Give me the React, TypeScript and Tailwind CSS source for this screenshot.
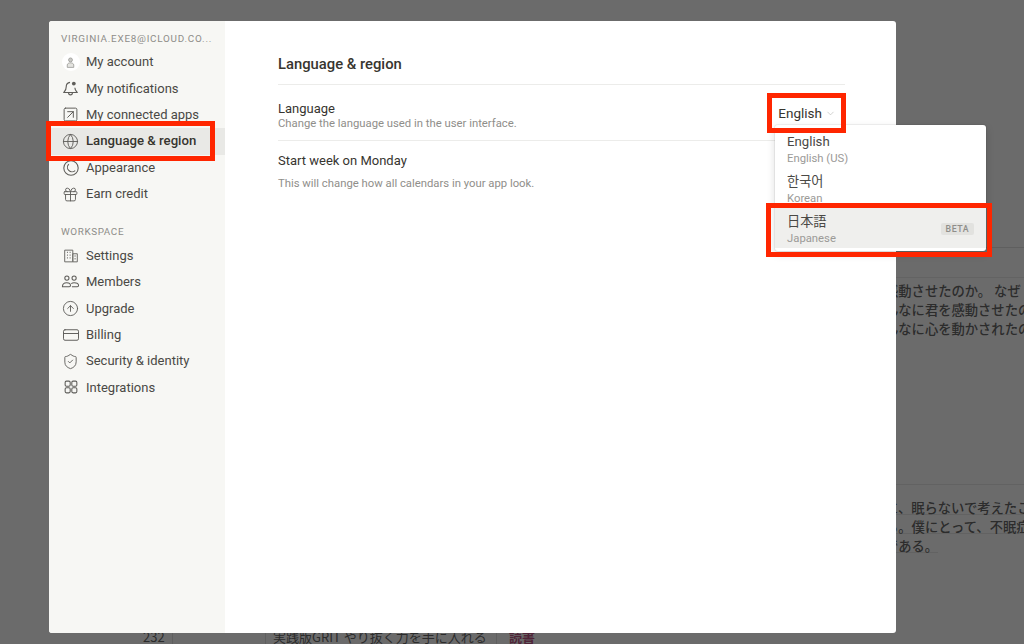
import { CreditCard, Gift, Globe, ShieldCheck, ChevronDown, CircleArrowUp, SquareArrowUpRight } from "lucide-react";
import type { ReactNode } from "react";

const iconClass = "w-[17px] h-[17px] text-[#5f5e5a]";

const AvatarIcon = () => (
  <div className="w-[18px] h-[18px] rounded-full bg-white flex items-center justify-center">
    <svg viewBox="0 0 16 16" className="w-[13px] h-[13px]" fill="none" stroke="#9a9a96" strokeWidth="1">
      <circle cx="8" cy="4.8" r="2.4" fill="#c9c9c5" />
      <path d="M4 14v-3c0-1.5 1.8-2.6 4-2.6s4 1.1 4 2.6v3z" fill="#e4e4e0" />
    </svg>
  </div>
);

const BellIcon = () => (
  <svg viewBox="0 0 20 20" className="w-[19px] h-[19px] text-[#5f5e5a]" fill="none" stroke="currentColor" strokeWidth="1.2">
    <path d="M9.5 3.5C7 3.8 5.5 5.8 5.5 8.2c0 3.8-2 5-2.5 6h14c-.5-1-2.2-2-2.4-5" />
    <path d="M8 14.5c0 3 4 3 4 0" />
    <circle cx="13.5" cy="4.8" r="2" fill="currentColor" stroke="none" />
  </svg>
);

const MoonIcon = () => (
  <svg viewBox="0 0 20 20" className="w-[18px] h-[18px] text-[#5f5e5a]" fill="none" stroke="currentColor" strokeWidth="1.2">
    <circle cx="10" cy="10" r="8" />
    <path d="M7.6 5.6a5 5 0 0 0 7 7.2A5 5 0 1 1 7.6 5.6z" fill="currentColor" />
  </svg>
);

const BuildingIcon = () => (
  <svg viewBox="0 0 20 20" className="w-[18px] h-[18px] text-[#6d6c68]" fill="none" stroke="currentColor" strokeWidth="1.1">
    <path d="M3 3.5h9v13H3zM12 7.5h5v9h-5z" />
    <path d="M5.5 6h1M8.5 6h1M5.5 9h1M8.5 9h1M5.5 12h1M8.5 12h1M14 10h1M14 13h1" strokeWidth="1.5" />
  </svg>
);

const MembersIcon = () => (
  <svg viewBox="0 0 20 20" className="w-[19px] h-[19px] text-[#5f5e5a]" fill="none" stroke="currentColor" strokeWidth="1.1">
    <circle cx="6.2" cy="6.4" r="2.2" />
    <circle cx="13.8" cy="6.4" r="2.2" />
    <path d="M1.5 15.5c0-2.6 2-4.2 4.5-4.2s4 1.4 4 3c0 .8-.5 1.2-1.3 1.2z" />
    <path d="M11.5 15.5h5.6c.9 0 1.4-.4 1.4-1.2 0-1.7-2-3-4.7-3-1.2 0-2.2.3-3 .9" />
  </svg>
);

const GridIcon = () => (
  <svg viewBox="0 0 20 20" className="w-[18px] h-[18px] text-[#5f5e5a]" fill="none" stroke="currentColor" strokeWidth="1.2">
    <rect x="3.5" y="3.5" width="5.6" height="5.6" rx="1.4" />
    <rect x="10.9" y="3.5" width="5.6" height="5.6" rx="1.4" />
    <rect x="3.5" y="10.9" width="5.6" height="5.6" rx="1.4" />
    <rect x="10.9" y="10.9" width="5.6" height="5.6" rx="1.4" />
  </svg>
);

type Row = { label: string; icon: ReactNode; active?: boolean };

const accountRows: Row[] = [
  { label: "My account", icon: <AvatarIcon /> },
  { label: "My notifications", icon: <BellIcon /> },
  { label: "My connected apps", icon: <SquareArrowUpRight className={iconClass} strokeWidth={1.4} /> },
  { label: "Language & region", icon: <Globe className={iconClass} strokeWidth={1.3} />, active: true },
  { label: "Appearance", icon: <MoonIcon /> },
  { label: "Earn credit", icon: <Gift className={iconClass} strokeWidth={1.3} /> },
];

const workspaceRows: Row[] = [
  { label: "Settings", icon: <BuildingIcon /> },
  { label: "Members", icon: <MembersIcon /> },
  { label: "Upgrade", icon: <CircleArrowUp className={iconClass} strokeWidth={1.3} /> },
  { label: "Billing", icon: <CreditCard className="w-[18px] h-[18px] text-[#5f5e5a]" strokeWidth={1.3} /> },
  { label: "Security & identity", icon: <ShieldCheck className={iconClass} strokeWidth={1.3} /> },
  { label: "Integrations", icon: <GridIcon /> },
];

const SideRow = ({ label, icon, active }: Row) => (
  <div className={`flex items-center h-[26.4px] pl-[12px] gap-[6px] ${active ? "bg-[#e9e9e6] text-[13.2px] font-medium text-[#37352f]" : "text-[13px] text-[#4a4945]"}`}>
    <span className="w-[19px] flex justify-center">{icon}</span>
    <span>{label}</span>
  </div>
);

const langs = [
  { name: "English", sub: "English (US)" },
  { name: "한국어", sub: "Korean" },
  { name: "日本語", sub: "Japanese", beta: true, hover: true },
];

const BgLine = ({ children }: { children: string }) => (
  <p className="h-[19px] leading-[19px] pl-[5px] text-[13.3px] font-medium text-[#2c2c2c] whitespace-nowrap">{children}</p>
);

// underlined rows of the lower text block
const BgLineRuled = ({ children }: { children: string }) => (
  <p className="w-fit h-[17px] mb-[2px] ml-[5px] leading-[19px] text-[13.3px] font-medium text-[#2c2c2c] whitespace-nowrap border-b border-[#626262]">{children}</p>
);

export default function App() {
  return (
    <div
      className="relative w-[1024px] h-[644px] overflow-hidden bg-[#6b6b6b]"
      style={{ fontFamily: 'Roboto, "Noto Sans CJK JP", "Noto Sans CJK KR", sans-serif' }}
    >
      {/* page behind the dialog */}
      <div className="flex flex-col pt-[247px]" style={{ fontFamily: '"Noto Sans CJK JP", sans-serif' }}>
        <div className="ml-[880px] overflow-hidden">
          <div className="border-t border-[#5f5f5f]" />
          <div className="border-t border-[#636363] mt-[29px]" />
          <div className="mt-[3px]">
            <BgLine>感動させたのか。 なぜ</BgLine>
            <BgLine>んなに君を感動させたの</BgLine>
            <BgLine>んなに心を動かされたの</BgLine>
          </div>
          <div className="border-t border-[#626262] mt-[146px]" />
          <div className="mt-[13px]">
            <BgLineRuled>に、眠らないで考えたこ</BgLineRuled>
            <BgLineRuled>る。僕にとって、不眠症</BgLineRuled>
            <BgLineRuled>である。</BgLineRuled>
          </div>
        </div>
        <div className="mt-[73px] flex items-start h-[20px] pl-[143px] text-[13px] leading-[18px] text-[#2c2c2c] whitespace-nowrap">
          <span className="w-[30px] border-r border-[#5f5f5f] h-[20px]">232</span>
          <span className="w-[93px] border-r border-[#5f5f5f] h-[20px]" />
          <span className="w-[231px] pl-[7px] border-r border-[#5f5f5f] h-[20px]">実践版GRIT やり抜く力を手に入れる</span>
          <span className="ml-[11px] px-[1px] text-[#4f2438] font-semibold">読書</span>
        </div>
      </div>

      {/* settings dialog */}
      <div className="absolute left-[49px] top-[21px] w-[847px] h-[612px] flex bg-white rounded-[3px] overflow-hidden">
        <aside className="w-[176px] shrink-0 bg-[#f7f7f4]">
          <div className="h-[28px] pl-[12px] pt-[12px] text-[9.9px] leading-[12px] tracking-[0.75px] text-[#8e8d89] whitespace-nowrap">
            VIRGINIA.EXE8@ICLOUD.CO...
          </div>
          {accountRows.map((r) => (
            <SideRow key={r.label} {...r} />
          ))}
          <div className="mt-[17px] h-[18px] pl-[12px] pt-[2px] text-[9.9px] leading-[12px] tracking-[0.6px] text-[#8e8d89]">
            WORKSPACE
          </div>
          {workspaceRows.map((r) => (
            <SideRow key={r.label} {...r} />
          ))}
        </aside>

        <main className="flex-1 pt-[33px] pl-[53px] pr-[51px]">
          <h1 className="h-[19px] text-[14.8px] leading-[20px] font-medium text-[#37352f]">Language &amp; region</h1>
          <div className="mt-[11px] border-t border-[#ececea]" />
          <div className="flex justify-between items-start h-[55px] pt-[16px]">
            <div>
              <div className="text-[13px] leading-[15px] text-[#37352f]">Language</div>
              <div className="text-[11.3px] leading-[15px] text-[#8f8e8a]">Change the language used in the user interface.</div>
            </div>
            <div className="flex items-center gap-[3px] pr-[9px] pt-[4px] text-[13.5px] leading-[16px] text-[#37352f]">
              English
              <ChevronDown className="w-[11px] h-[11px] text-[#b5b4b1]" strokeWidth={1.3} />
            </div>
          </div>
          <div className="border-t border-[#ececea]" />
          <div className="pt-[12px] text-[13px] leading-[15px] text-[#37352f]">Start week on Monday</div>
          <div className="mt-[8px] text-[11.3px] leading-[15px] text-[#8f8e8a]">This will change how all calendars in your app look.</div>
        </main>
      </div>

      {/* language dropdown */}
      <div className="absolute left-[775px] top-[125px] w-[211px] py-[3px] bg-white rounded-[3px] shadow-[0_0_0_1px_rgba(15,15,15,0.05),0_3px_8px_rgba(15,15,15,0.15)]">
        {langs.map((l) => (
          <div key={l.name} className={`flex items-center justify-between h-[40px] pl-[12px] pr-[12px] pt-[2px] ${l.hover ? "bg-[#efefed]" : ""}`}>
            <div>
              <div className="text-[13.2px] leading-[17px] text-[#4a4945]">{l.name}</div>
              <div className="mt-[1px] text-[11.3px] leading-[15px] text-[#9b9a97]">{l.sub}</div>
            </div>
            {l.beta && (
              <span className="h-[12px] px-[5px] rounded-[2px] bg-[#e2e2df] text-[8.8px] leading-[12px] tracking-[0.5px] font-medium text-[#8f8e8a]">BETA</span>
            )}
          </div>
        ))}
      </div>

      {/* red annotation boxes */}
      <div className="absolute left-[46px] top-[121px] w-[169px] h-[40px] border-[5px] border-[#ff2600]" />
      <div className="absolute left-[767px] top-[93px] w-[79px] h-[40px] border-[5px] border-[#ff2600]" />
      <div className="absolute left-[766px] top-[203px] w-[226px] h-[54px] border-[5px] border-[#ff2600]" />
    </div>
  );
}
